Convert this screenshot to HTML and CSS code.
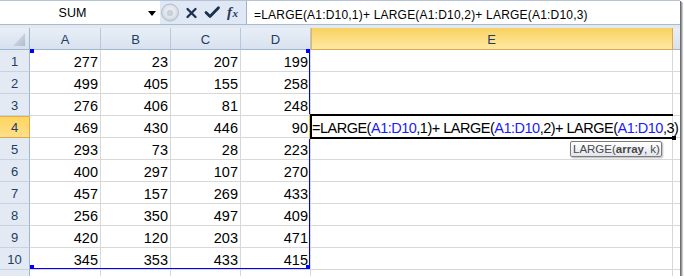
FILE: index.html
```html
<!DOCTYPE html>
<html>
<head>
<meta charset="utf-8">
<link rel="stylesheet" href="styles.css">
</head>
<body>
<div class="window">
  <div class="fbar">
    <div class="namebox">
      <span class="name">SUM</span>
      <svg class="dd" width="8" height="5" viewBox="0 0 8 5"><polygon points="0,0 8,0 4,5" fill="#000"/></svg>
    </div>
    <div class="btns">
      <svg width="86" height="23" viewBox="0 0 86 23">
        <defs>
          <radialGradient id="ball" cx="0.5" cy="0.45" r="0.6">
            <stop offset="0" stop-color="#f4f6f9"/>
            <stop offset="0.6" stop-color="#dfe4eb"/>
            <stop offset="1" stop-color="#b9c3d0"/>
          </radialGradient>
        </defs>
        <circle cx="10" cy="11.5" r="8.5" fill="url(#ball)" stroke="#b3bfcf" stroke-width="1"/>
        <circle cx="10" cy="12" r="3.2" fill="#c9d0da"/>
        <path d="M27.5 8 L35.5 16 M35.5 8 L27.5 16" stroke="#1c2f4f" stroke-width="2.3" stroke-linecap="round"/>
        <path d="M46 11.5 L50 15.5 L58.5 6.8" stroke="#1c2f4f" stroke-width="2.8" fill="none" stroke-linecap="round" stroke-linejoin="round"/>
        <text x="67" y="16" class="fx"><tspan class="fx-f">f</tspan><tspan class="fx-x" dx="0.5">x</tspan></text>
      </svg>
    </div>
    <div class="finput">=LARGE(A1:D10,1)+ LARGE(A1:D10,2)+ LARGE(A1:D10,3)</div>
  </div>
  <div class="band"></div>
  <div class="sheet">
    <div class="corner"><svg width="12" height="13" viewBox="0 0 12 13"><defs><linearGradient id="tri" x1="0" y1="0" x2="1" y2="1"><stop offset="0" stop-color="#dfe6ef"/><stop offset="1" stop-color="#aebbcc"/></linearGradient></defs><polygon points="0,13 12,0 12,13" fill="url(#tri)"/></svg></div>
    <div class="ch">A</div><div class="ch">B</div><div class="ch">C</div><div class="ch">D</div><div class="ch sel">E</div><div class="ch"></div>

    <div class="rh">1</div><div class="c n">277</div><div class="c n">23</div><div class="c n">207</div><div class="c n">199</div><div class="c"></div><div class="c"></div>
    <div class="rh">2</div><div class="c n">499</div><div class="c n">405</div><div class="c n">155</div><div class="c n">258</div><div class="c"></div><div class="c"></div>
    <div class="rh">3</div><div class="c n">276</div><div class="c n">406</div><div class="c n">81</div><div class="c n">248</div><div class="c"></div><div class="c"></div>
    <div class="rh sel">4</div><div class="c n">469</div><div class="c n">430</div><div class="c n">446</div><div class="c n">90</div><div class="c formula">=LARGE(<span class="ref">A1:D10</span>,1)+ LARGE(<span class="ref">A1:D10</span>,2)+ LARGE(<span class="ref">A1:D10</span>,3)</div><div class="c"></div>
    <div class="rh">5</div><div class="c n">293</div><div class="c n">73</div><div class="c n">28</div><div class="c n">223</div><div class="c"></div><div class="c"></div>
    <div class="rh">6</div><div class="c n">400</div><div class="c n">297</div><div class="c n">107</div><div class="c n">270</div><div class="c"></div><div class="c"></div>
    <div class="rh">7</div><div class="c n">457</div><div class="c n">157</div><div class="c n">269</div><div class="c n">433</div><div class="c"></div><div class="c"></div>
    <div class="rh">8</div><div class="c n">256</div><div class="c n">350</div><div class="c n">497</div><div class="c n">409</div><div class="c"></div><div class="c"></div>
    <div class="rh">9</div><div class="c n">420</div><div class="c n">120</div><div class="c n">203</div><div class="c n">471</div><div class="c"></div><div class="c"></div>
    <div class="rh">10</div><div class="c n">345</div><div class="c n">353</div><div class="c n">433</div><div class="c n">415</div><div class="c"></div><div class="c"></div>
    <div class="rh">11</div><div class="c"></div><div class="c"></div><div class="c"></div><div class="c"></div><div class="c"></div><div class="c"></div>
  </div>

  <div class="range">
    <span class="h tl"></span><span class="h tr"></span><span class="h bl"></span><span class="h br"></span>
  </div>
  <div class="active"></div>
  <div class="fill"></div>
  <div class="tip">LARGE(<b>array</b>, k)</div>
</div>
</body>
</html>
```

FILE: styles.css
```css
body {
  margin: 0;
  background: #fff;
  font-family: "Liberation Sans", Arial, sans-serif;
}

.window {
  position: relative;
  width: 680px;
  height: 276px;
  overflow: hidden;
  background: #fff;
  box-shadow: 1px 1px 0 #6e6e6e, 2px 2px 1px #9a9a9a, 3px 3px 1px #d6d6d6;
}

/* formula bar */
.fbar {
  display: flex;
  height: 25px;
  box-sizing: border-box;
  border-top: 1px solid #b4c3d6;
  border-bottom: 1px solid #a9bace;
  background: #fff;
}

.namebox {
  width: 160px;
  display: flex;
  align-items: flex-start;
}

.name {
  width: 145px;
  text-align: center;
  font-size: 12.5px;
  line-height: 21px;
  padding-top: 2px;
  color: #000;
}

.dd {
  margin-top: 10px;
  margin-left: 3px;
}

.btns {
  width: 87px;
  box-sizing: border-box;
  border-right: 1px solid #9fb3ca;
  background: #dfe8f4;
  display: flex;
}

.fx {
  font-family: "Liberation Serif", "Times New Roman", serif;
  font-style: italic;
  font-weight: bold;
  fill: #2a3a57;
}

.fx-f { font-size: 15px; }
.fx-x { font-size: 11px; }

.finput {
  flex: 1;
  font-size: 12px;
  letter-spacing: 0.2px;
  line-height: 18px;
  padding: 5px 0 0 7px;
  white-space: nowrap;
  color: #000;
}

.band {
  height: 3px;
  background: #e3e9f1;
}

/* sheet grid */
.sheet {
  display: grid;
  grid-template-columns: 30px 71px 70px 70px 70px 362px 8px;
  grid-auto-rows: 22px;
}

.sheet > div {
  box-sizing: border-box;
  overflow: hidden;
  white-space: nowrap;
}

.corner {
  background: linear-gradient(#e9eff7, #d6e0ee);
  border-right: 1px solid #9eb6ce;
  border-bottom: 1px solid #9eb6ce;
  display: flex;
  justify-content: flex-end;
  align-items: flex-end;
  padding: 0 4px 3px 0;
}

.corner svg { display: block; }

.ch {
  background: linear-gradient(#e8eef7, #d8e2ef);
  border-right: 1px solid #b7c8dc;
  border-bottom: 1px solid #9eb6ce;
  text-align: center;
  font-size: 13px;
  line-height: 20px;
  padding-top: 2px;
  color: #223d63;
}

.ch.sel {
  background: linear-gradient(#f8d160, #ffe9a2);
  border-right-color: #e2a944;
  border-bottom-color: #e2a944;
  box-shadow: inset 1px 0 0 #e9b453;
}

.rh {
  background: #e3eaf4;
  border-right: 1px solid #9eb6ce;
  border-bottom: 1px solid #c6d3e3;
  text-align: center;
  font-size: 13px;
  line-height: 20px;
  padding-top: 2px;
  color: #223d63;
}

.rh.sel {
  background: linear-gradient(#ffd45e, #ffe08a);
  border-right-color: #e0a744;
  border-bottom-color: #e0a744;
  box-shadow: inset 0 1px 0 #e7b04e;
}

.c {
  border-right: 1px solid #d8d8d8;
  border-bottom: 1px solid #d8d8d8;
  font-size: 14.5px;
  line-height: 20px;
  padding-top: 2px;
  color: #000;
  background: #fff;
}

.n {
  text-align: right;
  padding-right: 2px;
}

.sheet > .formula {
  overflow: visible;
  position: relative;
  z-index: 2;
  background: transparent;
  letter-spacing: -0.5px;
  padding-left: 1px;
}

.ref { color: #1a1aff; }

/* overlays */
.range {
  position: absolute;
  left: 30px;
  top: 49px;
  width: 280px;
  height: 220px;
  box-sizing: border-box;
  border-right: 1px solid #0000ff;
  border-bottom: 1px solid #0000ff;
  z-index: 3;
}

.h {
  position: absolute;
  width: 4px;
  height: 4px;
  background: #0000ff;
}

.tl { left: 0; top: 0; }
.tr { right: -1px; top: 0; }
.bl { left: 0; bottom: -1px; }
.br { right: -1px; bottom: -1px; }

.active {
  position: absolute;
  left: 310px;
  top: 114px;
  width: 363px;
  height: 25px;
  box-sizing: border-box;
  border-top: 2px solid #000;
  border-bottom: 2px solid #000;
  border-left: 2px solid #000;
  box-shadow: -1px 0 0 #efc23f;
  z-index: 4;
}

.fill {
  position: absolute;
  left: 672px;
  top: 136px;
  width: 4px;
  height: 4px;
  background: #000;
  z-index: 5;
}

.tip {
  position: absolute;
  left: 570px;
  top: 141px;
  width: 92px;
  height: 16px;
  box-sizing: border-box;
  border: 1px solid #7d7d7d;
  border-radius: 2px;
  background: linear-gradient(#ffffff, #e4e6ee);
  box-shadow: 1px 1px 2px rgba(0, 0, 0, 0.3);
  font-size: 11.5px;
  line-height: 14px;
  padding-left: 2px;
  color: #4a4a4a;
  white-space: nowrap;
  z-index: 6;
}

.tip b { font-weight: bold; }
```
